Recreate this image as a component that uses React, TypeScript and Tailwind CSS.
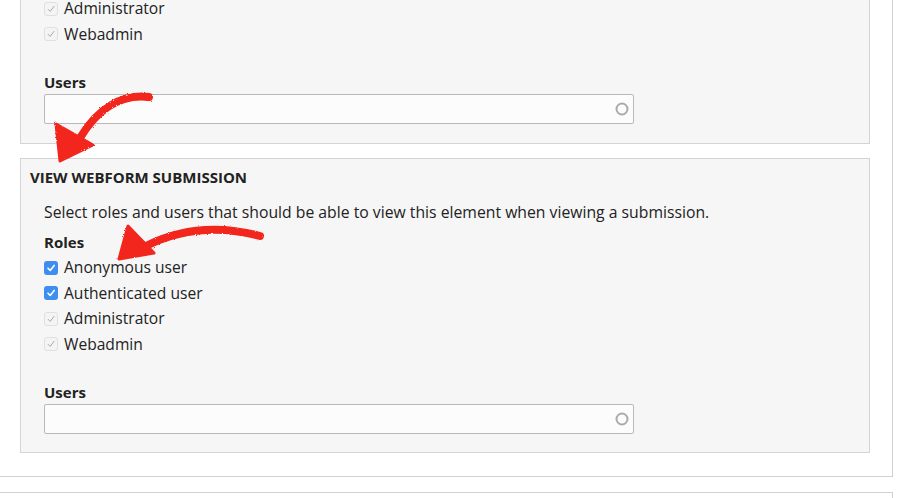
import React from "react";

const font = { fontFamily: '"Open Sans", "DejaVu Sans", sans-serif' };

function Check({ on }: { on: boolean }) {
  if (on) {
    return (
      <span className="flex h-[14px] w-[14px] items-center justify-center rounded-[3px] bg-[#3d8ef0]">
        <svg width="10" height="10" viewBox="0 0 10 10">
          <path d="M2 5.2 L4.2 7.4 L8.2 2.4" fill="none" stroke="#fff" strokeWidth="1.6" strokeLinecap="round" strokeLinejoin="round" />
        </svg>
      </span>
    );
  }
  return (
    <span className="flex h-[14px] w-[14px] items-center justify-center rounded-[3px] border border-[#e0e0e0] bg-[#f4f4f4]">
      <svg width="10" height="10" viewBox="0 0 10 10">
        <path d="M2.2 5.4 L4.2 7.4 L8 2.4" fill="none" stroke="#a8a8a8" strokeWidth="1" strokeLinecap="round" strokeLinejoin="round" />
      </svg>
    </span>
  );
}

function Role({ label, on }: { label: string; on: boolean }) {
  return (
    <div className="flex h-[25.5px] items-center gap-[6px]">
      <Check on={on} />
      <span className="text-[15.6px] text-[#222]">{label}</span>
    </div>
  );
}

function UsersField() {
  return (
    <div>
      <div className="text-[15px] font-bold leading-[20px] text-[#222]">Users</div>
      <div className="mt-[2px] flex h-[30px] w-[590px] items-center justify-end rounded-[2px] border border-[#b9b9b9] bg-[#fcfcfc] pr-[3px]">
        <svg width="16" height="16" viewBox="0 0 16 16">
          <circle cx="8" cy="8" r="5.5" fill="none" stroke="#ababab" strokeWidth="2" />
        </svg>
      </div>
    </div>
  );
}

export default function App() {
  return (
    <div className="relative h-[498px] w-[900px] overflow-hidden bg-white" style={font}>
      <div className="-mt-[31px] ml-[-3px] w-[896px] border border-[#d0d0d0] bg-white pb-[23px]">
        {/* access rules for element creation (top part scrolled away) */}
        <div className="mx-[22px] mt-[10px] border border-[#d4d4d4] bg-[#f6f6f6] pb-[19px] pl-[23px]">
          <div className="pt-[15px]">
            <Role label="Administrator" on={false} />
            <Role label="Webadmin" on={false} />
          </div>
          <div className="mt-[25px]">
            <UsersField />
          </div>
        </div>

        {/* view webform submission */}
        <div className="mx-[22px] mt-[14px] border border-[#d4d4d4] bg-[#f6f6f6] pb-[18px]">
          <div className="pl-[9px] pt-[8px] text-[15px] font-bold uppercase leading-[20px] text-[#222]">
            View webform submission
          </div>
          <div className="pl-[23px]">
            <div className="mt-[15px] text-[15.75px] leading-[20px] text-[#222]">
              Select roles and users that should be able to view this element when viewing a submission.
            </div>
            <div className="mt-[10px] text-[15px] font-bold leading-[20px] text-[#222]">Roles</div>
            <div className="mt-[3px]">
              <Role label="Anonymous user" on />
              <Role label="Authenticated user" on />
              <Role label="Administrator" on={false} />
              <Role label="Webadmin" on={false} />
            </div>
            <div className="mt-[25px]">
              <UsersField />
            </div>
          </div>
        </div>
      </div>

      <div className="ml-[-3px] mt-[15px] h-[40px] w-[896px] border border-[#d0d0d0] bg-white" />

      {/* hand-drawn red arrows */}
      <svg className="pointer-events-none absolute left-0 top-0" width="900" height="498" viewBox="0 0 900 498">
        <defs>
          <filter id="rough" x="-10%" y="-10%" width="120%" height="120%">
            <feTurbulence type="fractalNoise" baseFrequency="0.9" numOctaves="2" result="n" />
            <feDisplacementMap in="SourceGraphic" in2="n" scale="2.5" />
          </filter>
        </defs>
        <g filter="url(#rough)" fill="#f2261d" stroke="#f2261d" strokeLinecap="round" strokeLinejoin="round">
          <path d="M149 97 C 122 94, 98 108, 80 138" fill="none" strokeWidth="8" />
          <polygon points="56,124 60,161 93,145" strokeWidth="3" />
          <path d="M260 236 C 222 226, 182 228, 146 246" fill="none" strokeWidth="8" />
          <polygon points="128,226 119,259 154,253" strokeWidth="3" />
        </g>
      </svg>
    </div>
  );
}
